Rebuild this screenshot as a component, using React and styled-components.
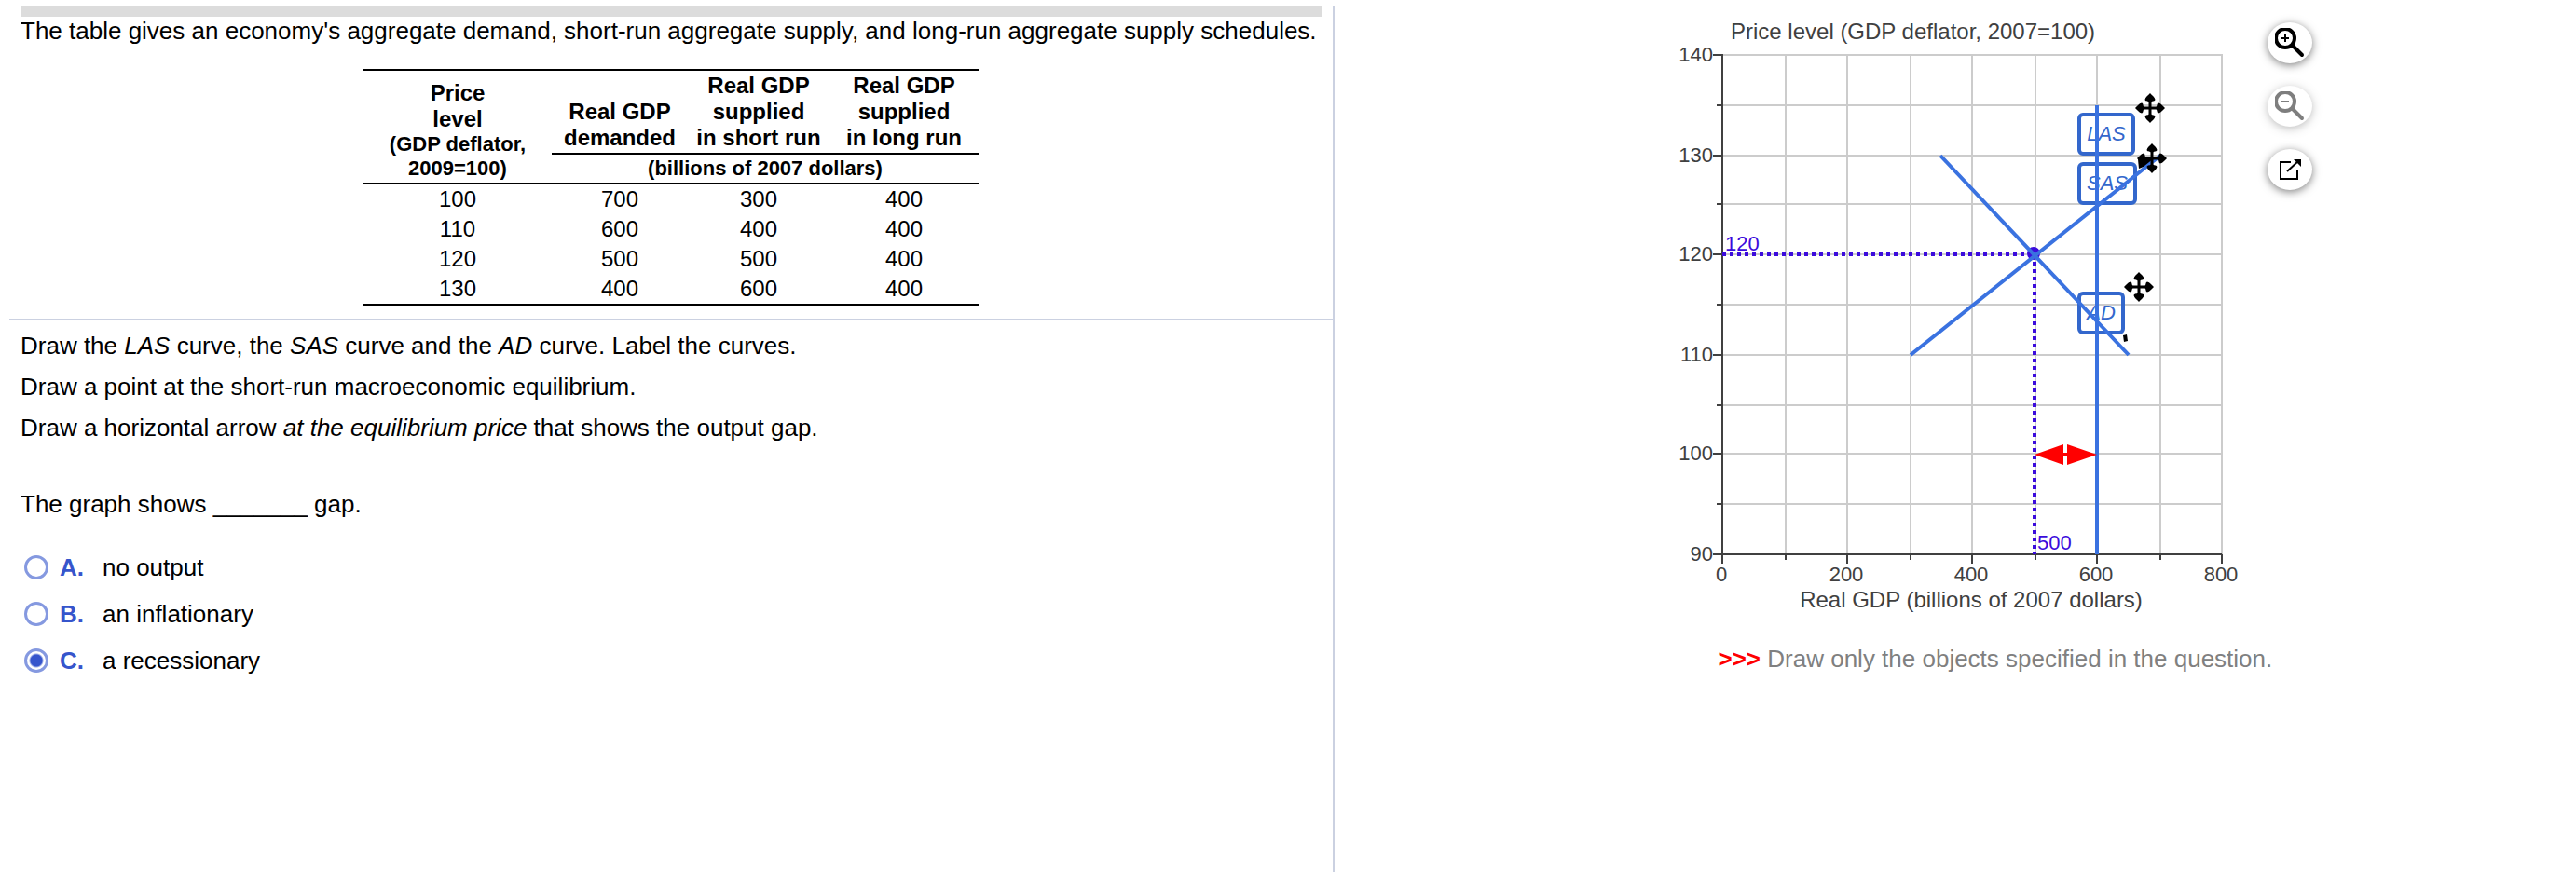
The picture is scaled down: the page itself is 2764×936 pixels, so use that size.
import { useState } from "react";
import styled, { createGlobalStyle } from "styled-components";

const schedule = [
  { price: 100, demanded: 700, shortRun: 300, longRun: 400 },
  { price: 110, demanded: 600, shortRun: 400, longRun: 400 },
  { price: 120, demanded: 500, shortRun: 500, longRun: 400 },
  { price: 130, demanded: 400, shortRun: 600, longRun: 400 },
];

const options = [
  { letter: "A", text: "no output" },
  { letter: "B", text: "an inflationary" },
  { letter: "C", text: "a recessionary" },
];

const plot = { left: 48, top: 39, size: 536 };

function snap(offset) {
  return Math.round(offset / 2) * 2;
}

function scaleX(gdp) {
  return plot.left + snap((gdp * plot.size) / 800);
}

function scaleY(price) {
  return plot.top + snap(((140 - price) * plot.size) / 50);
}

const gdpTicks = [0, 100, 200, 300, 400, 500, 600, 700, 800];
const priceTicks = [140, 135, 130, 125, 120, 115, 110, 105, 100, 95, 90];

const curves = [
  { name: "LAS", from: [600, 135], to: [600, 90] },
  { name: "SAS", from: [300, 110], to: [700, 130] },
  { name: "AD", from: [350, 130], to: [650, 110] },
];

const curveLabels = [
  { name: "LAS", x: 431, y: 103, width: 58 },
  { name: "SAS", x: 431, y: 156, width: 60 },
  { name: "AD", x: 431, y: 295, width: 47 },
];

const moveHandles = [
  [507, 96],
  [509, 150],
  [495, 288],
];

export default function App() {
  const [answer, setAnswer] = useState("C");

  return (
    <>
      <GlobalStyle />
      <StyledPage>
        <StyledQuestionPane>
          <StyledIntro>
            <StyledTopBar />
            <StyledText>
              The table gives an economy's aggregate demand, short-run aggregate
              supply, and long-run aggregate supply schedules.
            </StyledText>
            <ScheduleTable />
          </StyledIntro>
          <StyledDivider />
          <StyledTask>
            <StyledInstructions>
              <StyledText>
                Draw the <em>LAS</em> curve, the <em>SAS</em> curve and the{" "}
                <em>AD</em> curve. Label the curves.
              </StyledText>
              <StyledText>
                Draw a point at the short-run macroeconomic equilibrium.
              </StyledText>
              <StyledText>
                Draw a horizontal arrow <em>at the equilibrium price</em> that
                shows the output gap.
              </StyledText>
            </StyledInstructions>
            <StyledText id="gap-question">
              The graph shows _______ gap.
            </StyledText>
            <StyledOptions role="radiogroup" aria-labelledby="gap-question">
              {options.map(({ letter, text }) => (
                <StyledOption key={letter}>
                  <StyledRadio
                    type="radio"
                    name="gap"
                    value={letter}
                    checked={answer === letter}
                    onChange={() => setAnswer(letter)}
                  />
                  <StyledLetter>{letter}.</StyledLetter>
                  <span>{text}</span>
                </StyledOption>
              ))}
            </StyledOptions>
          </StyledTask>
        </StyledQuestionPane>
        <StyledGraphPane>
          <StyledGraph>
            <StyledGraphRow>
              <Chart />
              <StyledTools>
                <StyledToolButton type="button" aria-label="Zoom in">
                  <ZoomIcon plus />
                </StyledToolButton>
                <StyledToolButton type="button" aria-label="Zoom out" disabled>
                  <ZoomIcon />
                </StyledToolButton>
                <StyledToolButton type="button" aria-label="Open larger graph">
                  <PopOutIcon />
                </StyledToolButton>
              </StyledTools>
            </StyledGraphRow>
            <StyledNote>
              <StyledChevrons>&gt;&gt;&gt;</StyledChevrons> Draw only the objects
              specified in the question.
            </StyledNote>
          </StyledGraph>
        </StyledGraphPane>
      </StyledPage>
    </>
  );
}

function ScheduleTable() {
  return (
    <StyledTable>
      <colgroup>
        <StyledCol $width={202} />
        <StyledCol $width={146} />
        <StyledCol $width={152} />
        <StyledCol $width={160} />
      </colgroup>
      <thead>
        <tr>
          <StyledTh rowSpan={2}>
            Price
            <br />
            level
            <StyledUnit>
              (GDP deflator,
              <br />
              2009=100)
            </StyledUnit>
          </StyledTh>
          <StyledTh>
            Real GDP
            <br />
            demanded
          </StyledTh>
          <StyledTh>
            Real GDP
            <br />
            supplied
            <br />
            in short run
          </StyledTh>
          <StyledTh>
            Real GDP
            <br />
            supplied
            <br />
            in long run
          </StyledTh>
        </tr>
        <tr>
          <StyledTh colSpan={3}>
            <StyledUnit>(billions of 2007 dollars)</StyledUnit>
          </StyledTh>
        </tr>
      </thead>
      <tbody>
        {schedule.map((row) => (
          <tr key={row.price}>
            <StyledTd>{row.price}</StyledTd>
            <StyledTd>{row.demanded}</StyledTd>
            <StyledTd>{row.shortRun}</StyledTd>
            <StyledTd>{row.longRun}</StyledTd>
          </tr>
        ))}
      </tbody>
    </StyledTable>
  );
}

function Chart() {
  const right = scaleX(800);
  const bottom = scaleY(90);
  const pointX = scaleX(500) - 1;
  const pointY = scaleY(120);

  return (
    <StyledChart
      width="609"
      height="640"
      viewBox="0 0 609 640"
      role="img"
      aria-label="Graph of LAS, SAS and AD curves"
    >
      <StyledAxisTitle x="57" y="22">
        Price level (GDP deflator, 2007=100)
      </StyledAxisTitle>
      <g stroke="#cccccc" strokeWidth="2">
        {gdpTicks.map((gdp) => (
          <line
            key={gdp}
            x1={scaleX(gdp)}
            x2={scaleX(gdp)}
            y1={plot.top - 1}
            y2={bottom}
          />
        ))}
        {priceTicks.map((price) => (
          <line
            key={price}
            x1={plot.left}
            x2={right + 1}
            y1={scaleY(price)}
            y2={scaleY(price)}
          />
        ))}
      </g>
      <g stroke="#404040" strokeWidth="2">
        <line x1={plot.left} x2={plot.left} y1={plot.top - 1} y2={bottom} />
        <line x1={plot.left} x2={right} y1={bottom} y2={bottom} />
        {gdpTicks.map((gdp) => (
          <line
            key={gdp}
            x1={scaleX(gdp)}
            x2={scaleX(gdp)}
            y1={bottom}
            y2={bottom + (gdp % 200 ? 6 : 10)}
          />
        ))}
        {priceTicks.map((price) => (
          <line
            key={price}
            x1={plot.left - (price % 10 ? 6 : 10)}
            x2={plot.left}
            y1={scaleY(price)}
            y2={scaleY(price)}
          />
        ))}
      </g>
      {priceTicks
        .filter((price) => price % 10 === 0)
        .map((price) => (
          <StyledTickLabel
            key={price}
            x={plot.left - 10}
            y={scaleY(price) + 7}
            textAnchor="end"
          >
            {price}
          </StyledTickLabel>
        ))}
      {gdpTicks
        .filter((gdp) => gdp % 200 === 0)
        .map((gdp) => (
          <StyledTickLabel
            key={gdp}
            x={scaleX(gdp) - 1}
            y={bottom + 29}
            textAnchor="middle"
          >
            {gdp}
          </StyledTickLabel>
        ))}
      <StyledAxisTitle x="315" y="632" textAnchor="middle">
        Real GDP (billions of 2007 dollars)
      </StyledAxisTitle>

      {/* stray arrow tips of the label pointers */}
      <path d="M494 151L508 148L510 155L495 161Z" fill="#000" />
      <path d="M478 340L482 339L483 346L479 347Z" fill="#000" />

      {curveLabels.map(({ name, x, y, width }) => (
        <g key={name}>
          <rect
            x={x}
            y={y}
            width={width}
            height="42"
            rx="4"
            fill="none"
            stroke="#3367cc"
            strokeWidth="4"
          />
          <StyledCurveLabel x={x + width / 2} y={y + 28} textAnchor="middle">
            {name}
          </StyledCurveLabel>
        </g>
      ))}

      <g stroke="#3b0bdc" strokeWidth="4" strokeDasharray="4 4">
        <line x1={plot.left} x2={pointX} y1={pointY} y2={pointY} />
        <line x1={pointX} x2={pointX} y1={pointY} y2={bottom} />
      </g>
      <circle cx={pointX - 1} cy={pointY - 1} r="7" fill="#3b0bdc" />
      <StyledPointLabel x="51" y="249">
        120
      </StyledPointLabel>
      <StyledPointLabel x="386" y="570">
        500
      </StyledPointLabel>

      <g stroke="#3a72e0" strokeWidth="4">
        {curves.map(({ name, from, to }) => (
          <line
            key={name}
            x1={scaleX(from[0])}
            y1={scaleY(from[1])}
            x2={scaleX(to[0])}
            y2={scaleY(to[1])}
          />
        ))}
      </g>

      <path
        d="M383 468L414 457V466H418V457L450 468L418 479V470H414V479Z"
        fill="#ff0000"
      />

      {moveHandles.map(([x, y]) => (
        <MoveHandle key={y} x={x} y={y} />
      ))}
    </StyledChart>
  );
}

function MoveHandle({ x, y }) {
  return (
    <g transform={`translate(${x} ${y})`}>
      <path d="M0 -12V12M-12 0H12" stroke="#000" strokeWidth="3" />
      {[0, 90, 180, 270].map((angle) => (
        <path
          key={angle}
          transform={`rotate(${angle})`}
          d="M0 -16C2 -13.5 5 -12 5.500 -9C5 -7 3 -8 1 -6.500H-1C-3 -8 -5 -7 -5.500 -9C-5 -12 -2 -13.500 0 -16Z"
          fill="#000"
        />
      ))}
    </g>
  );
}

function ZoomIcon({ plus }) {
  return (
    <svg width="32" height="32" viewBox="0 0 32 32" fill="none">
      <circle cx="11" cy="11" r="10" stroke="#000" strokeWidth="4" />
      <path
        d="M19 19L29 29"
        stroke="#000"
        strokeWidth="4"
        strokeLinecap="round"
      />
      <path
        d={plus ? "M7 11H15M11 7V15" : "M7 11H15"}
        stroke="#000"
        strokeWidth="2"
      />
    </svg>
  );
}

function PopOutIcon() {
  return (
    <svg width="32" height="32" viewBox="0 0 32 32" fill="none">
      <path d="M17 8H6V26H24V16" stroke="#000" strokeWidth="2" />
      <path d="M13 18L25 7" stroke="#000" strokeWidth="2" />
      <path d="M20 5H28V13Z" fill="#000" />
    </svg>
  );
}

const GlobalStyle = createGlobalStyle`
  * {
    box-sizing: border-box;
  }
  body {
    margin: 0;
    background: #fff;
    color: #000;
    font-family: "Liberation Sans", Arial, sans-serif;
    font-size: 26px;
    line-height: 30px;
  }
`;

const StyledPage = styled.main`
  display: flex;
  min-height: 100vh;
  padding-top: 6px;
`;

const StyledQuestionPane = styled.section`
  width: calc(50% + 50px);
  border-right: 2px solid #cbd1e1;
`;

const StyledIntro = styled.div`
  padding: 0 12px 14px 22px;
`;

const StyledTopBar = styled.div`
  height: 12px;
  background: #dcdcdc;
`;

const StyledText = styled.p`
  margin: 0;
`;

const StyledTable = styled.table`
  width: 660px;
  margin: 26px auto 0;
  table-layout: fixed;
  border-collapse: separate;
  border-spacing: 0;
  border-top: 2px solid #000;
  border-bottom: 2px solid #000;
  font-size: 24px;
  text-align: center;
`;

const StyledCol = styled.col`
  width: ${({ $width }) => $width + "px"};
`;

const StyledTh = styled.th`
  padding: 2px 0;
  border-bottom: 2px solid #000;
  line-height: 28px;
  vertical-align: bottom;
  white-space: nowrap;
`;

const StyledUnit = styled.div`
  font-size: 22px;
  line-height: 26px;
`;

const StyledTd = styled.td`
  padding: 0;
  line-height: 32px;
`;

const StyledDivider = styled.hr`
  height: 2px;
  margin: 0 0 0 10px;
  border: 0;
  background: #cbd1e1;
`;

const StyledTask = styled.div`
  padding: 12px 12px 0 22px;
`;

const StyledInstructions = styled.div`
  display: flex;
  flex-direction: column;
  gap: 14px;
  margin-bottom: 52px;
`;

const StyledOptions = styled.div`
  display: flex;
  flex-direction: column;
  align-items: flex-start;
  gap: 20px;
  margin-top: 38px;
  padding-left: 4px;
`;

const StyledOption = styled.label`
  display: grid;
  grid-template-columns: 38px 46px auto;
  align-items: center;
`;

const StyledRadio = styled.input`
  appearance: none;
  width: 26px;
  height: 26px;
  margin: 0;
  border: 3px solid #8599e0;
  border-radius: 50%;
  background: #fff;
  &:checked {
    background: radial-gradient(circle, #3655cc 6px, #fff 8px);
  }
`;

const StyledLetter = styled.span`
  color: #3655cc;
  font-weight: bold;
`;

const StyledGraphPane = styled.section`
  flex: 1;
  display: flex;
  justify-content: center;
  align-items: flex-start;
  padding-top: 14px;
`;

const StyledGraph = styled.div`
  padding-left: 84px;
`;

const StyledGraphRow = styled.div`
  display: flex;
  gap: 24px;
`;

const StyledChart = styled.svg`
  display: block;
`;

const StyledAxisTitle = styled.text`
  fill: #404040;
  font-size: 24px;
`;

const StyledTickLabel = styled.text`
  fill: #404040;
  font-size: 22px;
`;

const StyledPointLabel = styled.text`
  fill: #3b0bdc;
  font-size: 22px;
`;

const StyledCurveLabel = styled.text`
  fill: #3367cc;
  font-size: 22px;
  font-style: italic;
`;

const StyledTools = styled.div`
  display: flex;
  flex-direction: column;
  gap: 24px;
  padding-top: 4px;
`;

const StyledToolButton = styled.button`
  display: flex;
  align-items: center;
  justify-content: center;
  width: 48px;
  height: 44px;
  padding: 0;
  border: 0;
  border-radius: 50%;
  background: #fff;
  box-shadow: 0 2px 10px rgba(0, 0, 0, 0.5);
  cursor: pointer;
  &:disabled {
    opacity: 0.5;
    cursor: default;
  }
`;

const StyledNote = styled.p`
  margin: 32px 0 0;
  padding-left: 44px;
  color: #808080;
`;

const StyledChevrons = styled.strong`
  color: #ff0000;
`;
